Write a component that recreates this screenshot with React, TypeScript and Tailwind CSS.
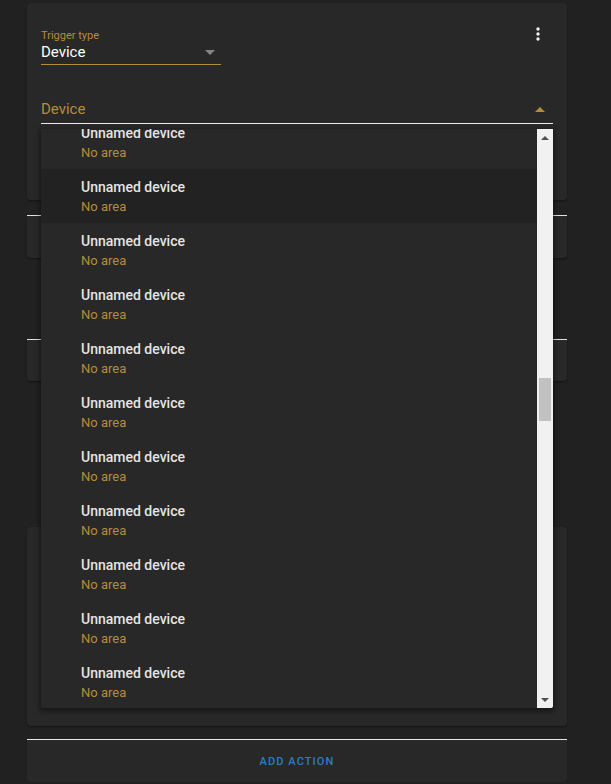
import React from 'react';

const items = Array.from({ length: 11 }, (_, i) => i);

function Dots() {
  return (
    <svg width="4" height="14" viewBox="0 0 4 14" className="block">
      <circle cx="2" cy="2" r="1.7" fill="#f0f0f0" />
      <circle cx="2" cy="7" r="1.7" fill="#f0f0f0" />
      <circle cx="2" cy="12" r="1.7" fill="#f0f0f0" />
    </svg>
  );
}

function Caret({ up, color, size = 10 }: { up?: boolean; color: string; size?: number }) {
  return (
    <svg width={size} height={size / 2} viewBox="0 0 10 5" className="block">
      {up ? <path d="M0 5 L5 0 L10 5 Z" fill={color} /> : <path d="M0 0 L10 0 L5 5 Z" fill={color} />}
    </svg>
  );
}

function DeviceMenu() {
  return (
    <div className="absolute left-[41px] top-[129px] flex h-[579px] w-[512px] overflow-hidden rounded-b-[2px] bg-[#282828] shadow-[0_2px_4px_2px_rgba(0,0,0,0.35)]">
      <div className="flex-1 overflow-hidden">
        <ul className="-mt-[14px]">
          {items.map((i) => (
            <li
              key={i}
              className={`flex h-[54px] flex-col justify-center pl-10 ${i === 1 ? 'bg-[#222222]' : ''}`}
            >
              <span className="text-[14px] font-medium leading-[20px] text-[#e4e4e4]">Unnamed device</span>
              <span className="text-[13px] leading-[19px] text-[#b38d3c]">No area</span>
            </li>
          ))}
        </ul>
      </div>
      <div className="flex w-[16px] flex-col bg-[#f1f1f1]">
        <div className="flex h-[17px] items-center justify-center">
          <Caret up color="#505050" size={8} />
        </div>
        <div className="h-[232px]" />
        <div className="mx-[2px] h-[43px] bg-[#c1c1c1]" />
        <div className="flex-1" />
        <div className="flex h-[17px] items-center justify-center">
          <Caret color="#505050" size={8} />
        </div>
      </div>
    </div>
  );
}

export default function App() {
  return (
    <div
      className="relative min-h-[784px] w-full overflow-hidden bg-[#212121] pt-[3px]"
      style={{ fontFamily: 'Roboto, "Noto Sans", sans-serif' }}
    >
      <div className="mx-[27px] flex w-[540px] flex-col">
        <section className="h-[197px] rounded-[4px] bg-[#282828] px-[14px] pt-[26px] shadow-[0_1px_2px_rgba(0,0,0,0.4)]">
          <div className="flex justify-between">
            <div className="w-[180px] border-b border-[#b38d3c]">
              <div className="text-[11px] leading-[13px] text-[#b38d3c]">Trigger type</div>
              <div className="flex items-center justify-between pb-[2px] pr-[6px]">
                <span className="text-[15px] leading-[20px] text-white">Device</span>
                <Caret color="#858585" />
              </div>
            </div>
            <div className="-mt-[2px] pr-[13px]">
              <Dots />
            </div>
          </div>
          <div className="mt-[34px] flex items-center justify-between border-b border-[#e8e8e8] pb-[4px] pr-[8px]">
            <span className="text-[15px] leading-[20px] text-[#b38d3c]">Device</span>
            <Caret up color="#b38d3c" />
          </div>
        </section>

        <div className="mt-[15px] h-px bg-[#e6e6e6]" />
        <section className="h-[42px] rounded-b-[4px] bg-[#282828] shadow-[0_1px_2px_rgba(0,0,0,0.4)]" />

        <div className="mt-[81px] h-px bg-[#e6e6e6]" />
        <section className="h-[41px] rounded-b-[4px] bg-[#282828] shadow-[0_1px_2px_rgba(0,0,0,0.4)]" />

        <section className="mt-[146px] h-[199px] rounded-[4px] bg-[#282828] shadow-[0_1px_2px_rgba(0,0,0,0.4)]" />

        <div className="mt-[13px] h-px bg-[#e6e6e6]" />
        <section className="flex h-[42px] items-center justify-center rounded-b-[4px] bg-[#282828] pt-[2px]">
          <span className="text-[11px] font-medium uppercase tracking-[0.1em] text-[#2c7dc4]">Add action</span>
        </section>
      </div>

      <DeviceMenu />
    </div>
  );
}
